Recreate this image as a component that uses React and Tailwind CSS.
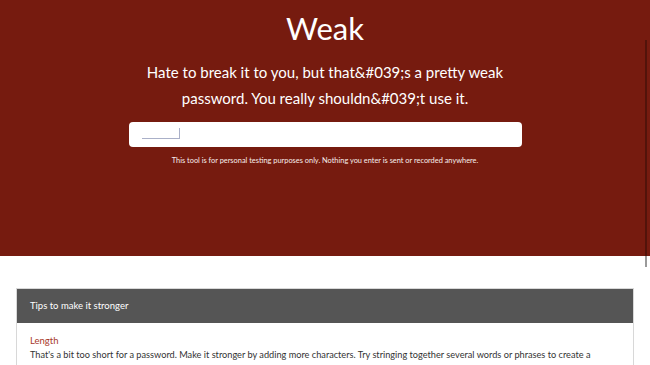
import React from 'react';

const App = () => {
  return (
    <div className="relative min-h-[365px] w-[650px] overflow-hidden bg-white font-['Lato',sans-serif]">
      {/* Result banner */}
      <div className="flex h-[256px] flex-col items-center bg-[#761b0f] pt-[8px] text-white">
        <h1 className="text-[31px] leading-[40px]">Weak</h1>
        <p className="mt-[11px] w-[380px] text-center text-[15px] leading-[26px]">
          Hate to break it to you, but that&amp;#039;s a pretty weak password. You really shouldn&amp;#039;t use it.
        </p>
        <div className="mt-[11px] flex h-[25px] w-[393px] items-start rounded-[4px] bg-white pl-[13px] pt-[6px]">
          <div className="h-[11px] w-[38px] border-b border-r border-[#aab0c8]"></div>
        </div>
        <p className="mt-[8px] text-[7.4px] text-[#f6eeec]">
          This tool is for personal testing purposes only. Nothing you enter is sent or recorded anywhere.
        </p>
      </div>

      {/* Tips */}
      <div className="px-[16px] pt-[32px]">
        <div className="border border-[#d8d8d8]">
          <div className="flex h-[34px] items-center bg-[#555555] px-[13px] text-[9.5px] text-white">
            Tips to make it stronger
          </div>
          <div className="px-[13px] pt-[11px]">
            <div className="text-[9.5px] leading-[14px] text-[#a8382a]">Length</div>
            <p className="text-[9.2px] leading-[14px] text-[#333333]">
              That's a bit too short for a password. Make it stronger by adding more characters. Try stringing together several words or phrases to create a passphrase.
            </p>
          </div>
        </div>
      </div>

      {/* scrollbar */}
      <div className="absolute left-[645px] top-[40px] h-[216px] w-[1.5px] bg-[#52130a]"></div>
      <div className="absolute left-[645px] top-[256px] h-[11px] w-[1.5px] bg-[#9a9a9a]"></div>
    </div>
  );
};

export default App;
